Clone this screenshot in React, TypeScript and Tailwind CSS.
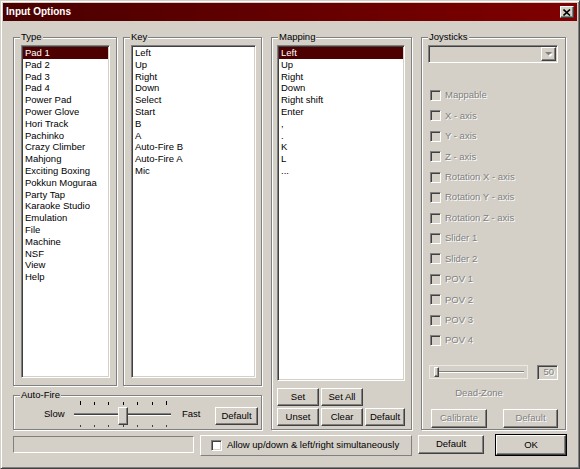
import React from "react";

const raised =
  "border border-t-white border-l-white border-r-[#404040] border-b-[#404040] shadow-[inset_-1px_-1px_0_#808080]";
const sunken =
  "border border-t-[#808080] border-l-[#808080] border-r-white border-b-white shadow-[inset_1px_1px_0_#404040,inset_-1px_-1px_0_#d4d0c8]";
const thinSunken = "border border-t-[#808080] border-l-[#808080] border-r-white border-b-white";
const grayed = "text-[#808080] [text-shadow:1px_1px_0_#fff]";

const types = [
  "Pad 1", "Pad 2", "Pad 3", "Pad 4", "Power Pad", "Power Glove", "Hori Track", "Pachinko",
  "Crazy Climber", "Mahjong", "Exciting Boxing", "Pokkun Moguraa", "Party Tap", "Karaoke Studio",
  "Emulation", "File", "Machine", "NSF", "View", "Help",
];
const keys = ["Left", "Up", "Right", "Down", "Select", "Start", "B", "A", "Auto-Fire B", "Auto-Fire A", "Mic"];
const mapping = ["Left", "Up", "Right", "Down", "Right shift", "Enter", ",", ".", "K", "L", "..."];
const axes = [
  "Mappable", "X - axis", "Y - axis", "Z - axis", "Rotation X - axis", "Rotation Y - axis",
  "Rotation Z - axis", "Slider 1", "Slider 2", "POV 1", "POV 2", "POV 3", "POV 4",
];

function Group({ label, className = "", children }: { label: string; className?: string; children?: React.ReactNode }) {
  return (
    <div className={`relative border border-[#808080] shadow-[inset_1px_1px_0_#fff,1px_1px_0_#fff] ${className}`}>
      <span className="absolute -top-[7px] left-[6px] bg-[#d4d0c8] px-[1px] leading-[12px] text-black">{label}</span>
      {children}
    </div>
  );
}

function Btn({ children, className = "", disabled = false }: { children: React.ReactNode; className?: string; disabled?: boolean }) {
  return (
    <div className={`flex items-center justify-center bg-[#d4d0c8] ${raised} ${disabled ? grayed : "text-black"} ${className}`}>
      {children}
    </div>
  );
}

function ListBox({ items, selected, className = "" }: { items: string[]; selected?: number; className?: string }) {
  return (
    <div className={`bg-white p-[1px] ${sunken} ${className}`}>
      {items.map((it, i) => (
        <div
          key={i}
          className={`h-[11.8px] leading-[11.8px] pl-[2px] whitespace-nowrap ${
            i === selected ? "bg-[#4d0000] text-white" : "text-black"
          }`}
        >
          {it}
        </div>
      ))}
    </div>
  );
}

function AutoFireSlider() {
  const ticks = [6, 20, 34, 49, 63, 78, 92];
  return (
    <div className="relative w-[97px] h-[27px] mt-[5px] ml-[9px]">
      <svg width="97" height="27" className="absolute left-0 top-0">
        {ticks.map((x, i) => (
          <g key={i}>
            <rect x={x} y={i === 0 || i === 6 ? 0 : 1} width="1" height={i === 0 || i === 6 ? 4 : 3} fill="#000" />
            <rect x={x} y="24" width="1" height="2" fill="#404040" />
          </g>
        ))}
        <rect x="0" y="12" width="97" height="1" fill="#808080" />
        <rect x="0" y="13" width="97" height="1" fill="#404040" />
        <rect x="0" y="14" width="97" height="1" fill="#fff" />
      </svg>
      <div className={`absolute left-[44px] top-[6px] w-[10px] h-[18px] bg-[#d4d0c8] ${raised}`} />
    </div>
  );
}

function CheckRow({ label }: { label: string }) {
  return (
    <div className="flex items-center h-[20.43px]">
      <div className={`ml-[2px] w-[11px] h-[11px] bg-[#d4d0c8] ${thinSunken} shadow-[inset_1px_1px_0_#404040]`} />
      <span className={`ml-[4px] whitespace-nowrap ${grayed}`}>{label}</span>
    </div>
  );
}

export default function App() {
  return (
    <div
      className={`w-[580px] h-[469px] bg-[#d4d0c8] p-[2px] border border-t-[#d4d0c8] border-l-[#d4d0c8] border-r-[#404040] border-b-[#404040] shadow-[inset_1px_1px_0_#fff,inset_-1px_-1px_0_#808080] font-['Liberation_Sans',Arial,sans-serif] text-[9.5px] text-black select-none overflow-hidden`}
    >
      {/* Title bar */}
      <div className="h-[18px] flex items-center bg-gradient-to-r from-[#4a0000] to-[#800000]">
        <span className="pl-[3px] text-white font-bold text-[10px] leading-[18px]">Input Options</span>
        <div className={`ml-auto mr-[3px] w-[14px] h-[12px] bg-[#d4d0c8] ${raised} flex items-center justify-center`}>
          <svg width="8" height="7" viewBox="0 0 8 7">
            <path d="M0.5 0.5 L7 6.5 M7 0.5 L0.5 6.5" stroke="#000" strokeWidth="1.6" />
          </svg>
        </div>
      </div>

      {/* Main row */}
      <div className="flex mt-[16px] pl-[10px] h-[393px]">
        {/* Left column */}
        <div className="flex flex-col w-[249px]">
          <div className="flex h-[349px]">
            <Group label="Type" className="w-[104px]">
              <ListBox items={types} selected={0} className="ml-[7px] mt-[7px] w-[89px] h-[333px]" />
            </Group>
            <Group label="Key" className="ml-[6px] w-[139px]">
              <ListBox items={keys} className="ml-[7px] mt-[7px] w-[125px] h-[333px]" />
            </Group>
          </div>
          <Group label="Auto-Fire" className="mt-[9px] h-[35px]">
            <div className="flex items-start">
              <span className="ml-[30px] mt-[12px] w-[21px] leading-[12px]">Slow</span>
              <AutoFireSlider />
              <span className="ml-[11px] mt-[12px] w-[20px] leading-[12px]">Fast</span>
              <Btn className="ml-[13px] mt-[11px] w-[43px] h-[18px]">Default</Btn>
            </div>
          </Group>
        </div>

        {/* Mapping */}
        <Group label="Mapping" className="ml-[9px] w-[141px]">
          <div className="ml-[5px] mt-[7px] w-[128px]">
            <ListBox items={mapping} selected={0} className="h-[336px]" />
            <div className="flex gap-[2px] mt-[7px]">
              <Btn className="w-[42px] h-[18px]">Set</Btn>
              <Btn className="w-[42px] h-[18px]">Set All</Btn>
            </div>
            <div className="flex gap-[2px] mt-[2px]">
              <Btn className="w-[42px] h-[18px]">Unset</Btn>
              <Btn className="w-[42px] h-[18px]">Clear</Btn>
              <Btn className="w-[40px] h-[18px]">Default</Btn>
            </div>
          </div>
        </Group>

        {/* Joysticks */}
        <Group label="Joysticks" className="ml-[9px] w-[145px]">
          <div className="pl-[6px] flex flex-col">
            <div className={`mt-[7px] w-[130px] h-[18px] bg-[#d4d0c8] p-[1px] ${sunken} flex justify-end`}>
              <div className={`w-[15px] h-[14px] bg-[#d4d0c8] ${raised} flex items-center justify-center`}>
                <svg width="8" height="5" viewBox="0 0 8 5">
                  <path d="M1 1 L7 1 L4 4 Z" fill="#fff" transform="translate(1 1)" />
                  <path d="M0 0 L7 0 L3.5 3.5 Z" fill="#808080" />
                </svg>
              </div>
            </div>
            <div className="mt-[22.3px] flex flex-col">
              {axes.map((a) => (
                <CheckRow key={a} label={a} />
              ))}
            </div>
            <div className="flex mt-[14px]">
              <div className="relative ml-[1px] w-[99px] h-[14px] border border-[#ece9e2]">
                <div className="absolute left-[4px] right-[3px] top-[5px] h-[2px] border-t border-t-[#808080] border-b border-b-white shadow-[inset_0_1px_0_#404040]" />
                <div className={`absolute left-[4px] top-[1px] w-[5px] h-[10px] bg-[#d4d0c8] ${raised}`} />
              </div>
              <div className={`ml-[9px] w-[21px] h-[15px] bg-[#d4d0c8] ${sunken} flex items-center justify-end pr-[3px] ${grayed}`}>
                50
              </div>
            </div>
            <div className={`ml-[1px] mt-[7px] w-[100px] text-center leading-[12px] ${grayed}`}>Dead-Zone</div>
            <div className="flex mt-[10px]">
              <Btn disabled className="ml-[3px] w-[56px] h-[19px]">Calibrate</Btn>
              <Btn disabled className="ml-[16px] w-[55px] h-[19px]">Default</Btn>
            </div>
          </div>
        </Group>
      </div>

      {/* Bottom row */}
      <div className="flex items-start mt-[4px] pl-[10px]">
        <div className={`mt-[2px] w-[181px] h-[17px] ${thinSunken}`} />
        <div className="ml-[6px] mt-[1px] w-[212px] h-[21px] border border-t-white border-l-white border-r-[#808080] border-b-[#808080] flex items-center">
          <div className={`ml-[10px] w-[11px] h-[11px] bg-white ${sunken}`} />
          <span className="ml-[5px] whitespace-nowrap">Allow up/down &amp; left/right simultaneously</span>
        </div>
        <Btn className="ml-[6px] mt-[1px] w-[66px] h-[19px]">Default</Btn>
        <div className="ml-[11px] w-[72px] h-[22px] border border-black">
          <Btn className="w-full h-full">OK</Btn>
        </div>
      </div>
    </div>
  );
}
